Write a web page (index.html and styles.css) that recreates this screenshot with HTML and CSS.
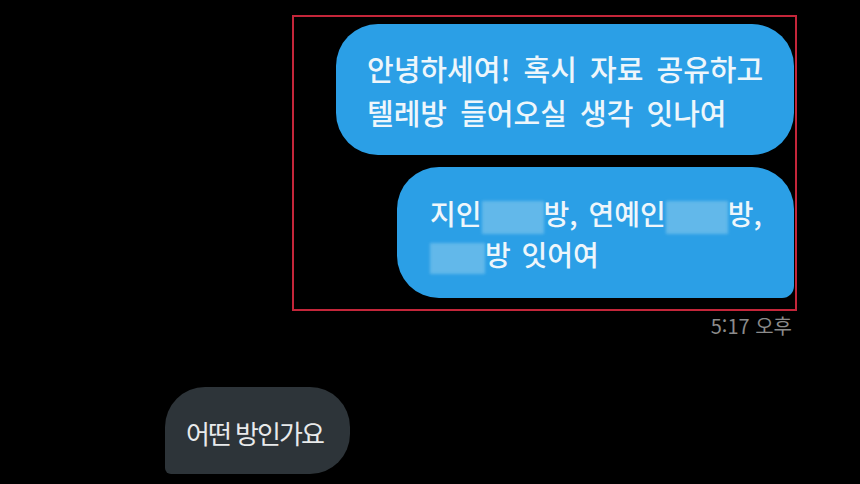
FILE: index.html
```html
<!DOCTYPE html>
<html lang="ko">
<head>
  <meta charset="UTF-8">
  <meta name="viewport" content="width=device-width, initial-scale=1.0">
  <title>채팅</title>
  <link rel="stylesheet" href="styles.css">
</head>
<body>
  <main class="chat">
    <section class="highlight">
      <div class="bubble bubble-out first">
        <div class="line">안녕하세여! 혹시 자료 공유하고</div>
        <div class="line">텔레방 들어오실 생각 잇나여</div>
      </div>
      <div class="bubble bubble-out last">
        <div class="line">지인<span class="mask"></span>방, 연예인<span class="mask"></span>방,</div>
        <div class="line"><span class="mask short"></span>방 잇어여</div>
      </div>
    </section>
    <div class="time">5:17 오후</div>
    <div class="incoming">
      <div class="bubble bubble-in">어떤 방인가요</div>
    </div>
  </main>
</body>
</html>
```

FILE: styles.css
```css
html, body {
  margin: 0;
  background: #000;
}
body {
  font-family: "Noto Sans CJK KR", "Noto Sans", sans-serif;
  color: #eef6fb;
}
.chat {
  width: 860px;
  height: 484px;
  padding-top: 15px;
  box-sizing: border-box;
  overflow: hidden;
}
.highlight {
  margin-left: 292px;
  width: 505px;
  height: 296px;
  box-sizing: border-box;
  border: 2px solid #c4263a;
  padding: 7px 1px 0 0;
  display: flex;
  flex-direction: column;
  align-items: flex-end;
  gap: 12px;
}
.bubble {
  box-sizing: border-box;
  white-space: nowrap;
}
.bubble-out {
  background: #2b9fe6;
  font-weight: 500;
  border-radius: 42px;
}
.bubble-out.first {
  width: 458px;
  height: 131px;
  padding: 22px 0 0 31px;
  font-size: 29px;
  word-spacing: 5px;
  line-height: 44px;
}
.bubble-out.last {
  width: 397px;
  height: 131px;
  padding: 26px 0 0 33px;
  font-size: 28px;
  word-spacing: 3px;
  line-height: 41px;
  border-bottom-right-radius: 12px;
}
.mask {
  display: inline-block;
  width: 62px;
  height: 33px;
  vertical-align: middle;
  background: #62b8ea;
  filter: blur(1.5px);
}
.mask.short {
  width: 55px;
  height: 31px;
}
.time {
  margin: 3px 0 0 292px;
  width: 505px;
  box-sizing: border-box;
  padding-right: 5px;
  text-align: right;
  font-size: 20px;
  line-height: 24px;
  color: #8b8b8b;
}
.incoming {
  margin-top: 49px;
  padding-left: 165px;
}
.bubble-in {
  display: inline-block;
  width: 185px;
  height: 87px;
  padding: 2px 0 0 21px;
  line-height: 87px;
  font-size: 26px;
  letter-spacing: -2px;
  color: #e8eaeb;
  background: #2d3439;
  border-radius: 40px 40px 40px 6px;
}
```
